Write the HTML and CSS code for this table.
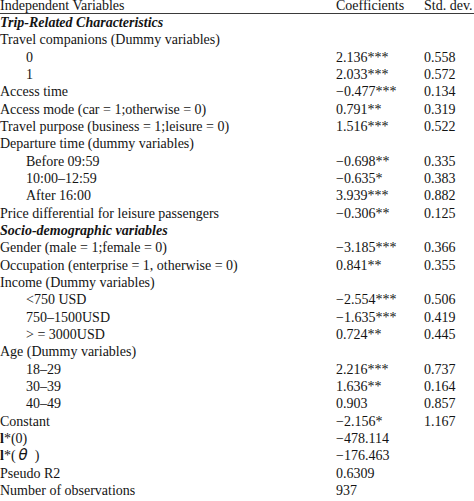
FILE: index.html
```html
<!DOCTYPE html>
<html>
<head>
<meta charset="utf-8">
<link rel="stylesheet" href="styles.css">
</head>
<body>
<div class="table">
  <div class="row head"><span>Independent Variables</span><span>Coefficients</span><span>Std. dev.</span></div>
  <div class="row"><span class="sec">Trip-Related Characteristics</span><span></span><span></span></div>
  <div class="row"><span>Travel companions (Dummy variables)</span><span></span><span></span></div>
  <div class="row"><span class="ind">0</span><span>2.136***</span><span>0.558</span></div>
  <div class="row"><span class="ind">1</span><span>2.033***</span><span>0.572</span></div>
  <div class="row"><span>Access time</span><span>−0.477***</span><span>0.134</span></div>
  <div class="row"><span>Access mode (car = 1;otherwise = 0)</span><span>0.791**</span><span>0.319</span></div>
  <div class="row"><span>Travel purpose (business = 1;leisure = 0)</span><span>1.516***</span><span>0.522</span></div>
  <div class="row"><span>Departure time (dummy variables)</span><span></span><span></span></div>
  <div class="row"><span class="ind">Before 09:59</span><span>−0.698**</span><span>0.335</span></div>
  <div class="row"><span class="ind">10:00–12:59</span><span>−0.635*</span><span>0.383</span></div>
  <div class="row"><span class="ind">After 16:00</span><span>3.939***</span><span>0.882</span></div>
  <div class="row"><span>Price differential for leisure passengers</span><span>−0.306**</span><span>0.125</span></div>
  <div class="row"><span class="sec">Socio-demographic variables</span><span></span><span></span></div>
  <div class="row"><span>Gender (male = 1;female = 0)</span><span>−3.185***</span><span>0.366</span></div>
  <div class="row"><span>Occupation (enterprise = 1, otherwise = 0)</span><span>0.841**</span><span>0.355</span></div>
  <div class="row"><span>Income (Dummy variables)</span><span></span><span></span></div>
  <div class="row"><span class="ind">&lt;750 USD</span><span>−2.554***</span><span>0.506</span></div>
  <div class="row"><span class="ind">750–1500USD</span><span>−1.635***</span><span>0.419</span></div>
  <div class="row"><span class="ind">&gt; = 3000USD</span><span>0.724**</span><span>0.445</span></div>
  <div class="row"><span>Age (Dummy variables)</span><span></span><span></span></div>
  <div class="row"><span class="ind">18–29</span><span>2.216***</span><span>0.737</span></div>
  <div class="row"><span class="ind">30–39</span><span>1.636**</span><span>0.164</span></div>
  <div class="row"><span class="ind">40–49</span><span>0.903</span><span>0.857</span></div>
  <div class="row"><span>Constant</span><span>−2.156*</span><span>1.167</span></div>
  <div class="row"><span><b class="ell">l</b>*(0)</span><span>−478.114</span><span></span></div>
  <div class="row"><span><b class="ell">l</b>*(<i class="theta">θ</i>&nbsp; )</span><span>−176.463</span><span></span></div>
  <div class="row"><span>Pseudo R2</span><span>0.6309</span><span></span></div>
  <div class="row"><span>Number of observations</span><span>937</span><span></span></div>
</div>
</body>
</html>
```
FILE: styles.css
```css
html, body {
  margin: 0;
  padding: 0;
  background: #fff;
}
body {
  font-family: "Liberation Serif", "Times New Roman", serif;
  font-size: 14px;
  color: #141414;
  overflow: hidden;
}
.table {
  margin-top: -1.5px;
}
.row {
  display: grid;
  grid-template-columns: 336px 88px 1fr;
  height: 17.35px;
  line-height: 17.35px;
  white-space: nowrap;
}
.row.head {
  line-height: 13px;
  border-bottom: 1.4px solid #3a3a3a;
  box-sizing: border-box;
  height: 15.4px;
}
.sec {
  font-weight: bold;
  font-style: italic;
}
.ind {
  padding-left: 26px;
}
.ell {
  font-weight: bold;
}
.theta {
  font-family: "DejaVu Sans", sans-serif;
  font-size: 15px;
  padding-left: 3px;
}
```
